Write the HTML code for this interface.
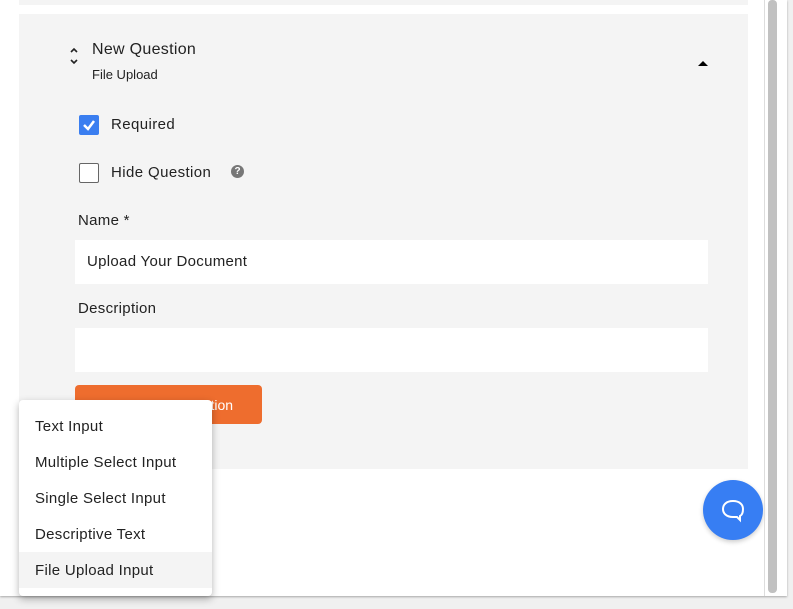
<!DOCTYPE html><html><head><style>
body{margin:0;width:793px;height:609px;background:#f0f0f0;font-family:"Liberation Sans",sans-serif;position:relative;overflow:hidden;color:#222}
.page{position:absolute;left:0;top:0;width:787px;height:596px;background:#fff;box-shadow:0 1px 2px rgba(0,0,0,.3)}
.a{position:absolute}
.inp{position:absolute;left:75px;width:633px;background:#fff;font-size:15px;line-height:44px;height:44px;text-indent:12px;letter-spacing:.3px}
.lbl{position:absolute;left:78px;font-size:15px;letter-spacing:.3px}
.menu{position:absolute;left:19px;top:400px;width:193px;height:196px;background:#fff;border-radius:4px;box-shadow:0 3px 8px rgba(0,0,0,.3)}
.menu div{height:36px;line-height:36px;padding-left:16px;font-size:15px;letter-spacing:.3px}
</style></head><body>
<div class="page">
<div class="a" style="left:19px;top:0;width:729px;height:5px;background:#f4f4f4"></div>
<div class="a" style="left:19px;top:14px;width:729px;height:455px;background:#f4f4f4"></div>
<svg class="a" style="left:68px;top:46px" width="12" height="20"><path d="M3 6l3-3 3 3M3 14l3 3 3-3" stroke="#222" stroke-width="1.6" fill="none"/></svg>
<div class="a" style="left:92px;top:41px;font-size:16px;letter-spacing:.3px">New Question</div>
<div class="a" style="left:92px;top:67px;font-size:13px">File Upload</div>
<div class="a" style="left:698px;top:61px;width:0;height:0;border-left:5px solid transparent;border-right:5px solid transparent;border-bottom:5px solid #000"></div>
<div class="a" style="left:79px;top:115px;width:20px;height:20px;background:#3a7ef0;border-radius:2px"><svg width="20" height="20"><path d="M5 10l4 4 6-8" stroke="#fff" stroke-width="2.5" fill="none"/></svg></div>
<div class="a" style="left:111px;top:116px;font-size:15px;letter-spacing:.4px">Required</div>
<div class="a" style="left:79px;top:163px;width:18px;height:18px;border:1px solid #666;border-radius:2px;background:#fff"></div>
<div class="a" style="left:111px;top:164px;font-size:15px;letter-spacing:.4px">Hide Question</div>
<div class="a" style="left:231px;top:165px;width:13px;height:13px;border-radius:50%;background:#777;color:#fff;font-size:10px;font-weight:bold;text-align:center;line-height:13px">?</div>
<div class="lbl" style="top:212px">Name *</div>
<div class="inp" style="top:240px">Upload Your Document</div>
<div class="lbl" style="top:300px">Description</div>
<div class="inp" style="top:328px"></div>
<div class="a" style="left:75px;top:385px;width:187px;height:39px;background:#ee6d2e;border-radius:4px;color:#fff;font-size:14px;line-height:40px;text-indent:46px">Remove Question</div>
<div class="a" style="left:703px;top:480px;width:60px;height:60px;border-radius:50%;background:#377ef3;box-shadow:0 2px 5px rgba(0,0,0,.2)"><svg width="60" height="60"><path d="M30 21c-7 0-10 4-10 8s3 8 10 8h4l3 3v-4c2-1 3-4 3-7 0-4-3-8-10-8z" stroke="#fff" stroke-width="2" fill="none"/></svg></div>
<div class="a" style="left:764px;top:0;width:1px;height:596px;background:#ddd"></div>
<div class="a" style="left:768px;top:0;width:9px;height:593px;background:#c1c1c1;border-radius:4px"></div>
</div>
<div class="menu"><div style="margin-top:8px;line-height:38px">Text Input</div><div style="line-height:38px">Multiple Select Input</div><div style="line-height:38px">Single Select Input</div><div style="line-height:38px">Descriptive Text</div><div style="background:#f4f4f4;line-height:38px">File Upload Input</div></div>
</body></html>
